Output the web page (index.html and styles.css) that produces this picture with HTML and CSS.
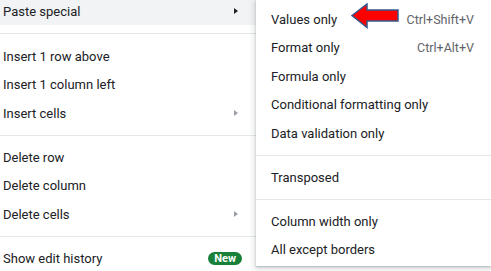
FILE: index.html
```html
<!DOCTYPE html>
<html>
<head>
<meta charset="utf-8">
<link rel="stylesheet" href="styles.css">
</head>
<body>
<div class="stage">
  <div class="menu">
    <div class="item active"><span class="label">Paste special</span><span class="tri dark"></span></div>
    <div class="sep first"></div>
    <div class="item"><span class="label">Insert 1 row above</span></div>
    <div class="item"><span class="label">Insert 1 column left</span></div>
    <div class="item"><span class="label">Insert cells</span><span class="tri"></span></div>
    <div class="sep"></div>
    <div class="item"><span class="label">Delete row</span></div>
    <div class="item"><span class="label">Delete column</span></div>
    <div class="item"><span class="label">Delete cells</span><span class="tri"></span></div>
    <div class="sep"></div>
    <div class="item"><span class="label">Show edit history</span><span class="badge">New</span></div>
  </div>
  <div class="submenu">
    <div class="sitem"><span class="label">Values only</span><span class="key">Ctrl+Shift+V</span></div>
    <div class="sitem"><span class="label">Format only</span><span class="key">Ctrl+Alt+V</span></div>
    <div class="sitem"><span class="label">Formula only</span></div>
    <div class="sitem"><span class="label">Conditional formatting only</span></div>
    <div class="sitem"><span class="label">Data validation only</span></div>
    <div class="sep"></div>
    <div class="sitem"><span class="label">Transposed</span></div>
    <div class="sep"></div>
    <div class="sitem"><span class="label">Column width only</span></div>
    <div class="sitem"><span class="label">All except borders</span></div>
  </div>
  <svg class="callout" width="50" height="28" viewBox="0 0 50 28">
    <polygon points="1,12.5 16,1 16,7 47,7 47,18 16,18 16,24.5 1,12.5" fill="#ff0000" stroke="#36598c" stroke-width="1.5" stroke-linejoin="miter"/>
  </svg>
</div>
</body>
</html>
```

FILE: styles.css
```css
html, body {
  margin: 0;
  padding: 0;
  background: #ffffff;
}
body {
  font-family: Roboto, "Liberation Sans", sans-serif;
  font-size: 13px;
  color: #202124;
  overflow: hidden;
}
.stage {
  position: relative;
  width: 491px;
  height: 271px;
  display: flex;
  overflow: hidden;
}
.menu {
  width: 256px;
  flex: none;
  margin-top: -3px;
  background: #ffffff;
}
.item {
  height: 28.5px;
  display: flex;
  align-items: center;
  padding: 0 18px 0 3px;
}
.item .label {
  flex: 1;
}
.item.active {
  background: #f1f3f4;
  height: 28px;
}
.sep {
  height: 1px;
  background: #e5e7ea;
  margin: 7px 0 7.5px;
}
.sep.first {
  margin: 7.5px 0 8.5px;
}
.tri {
  width: 0;
  height: 0;
  border-top: 3px solid transparent;
  border-bottom: 3px solid transparent;
  border-left: 4px solid #9aa0a6;
}
.tri.dark {
  border-left-color: #202124;
}
.badge {
  background: #188038;
  color: #ffffff;
  font-weight: 700;
  font-size: 11px;
  line-height: 13px;
  height: 13px;
  padding: 0 6px;
  border-radius: 7px;
  margin-right: -4px;
}
.submenu {
  width: 235px;
  flex: none;
  align-self: flex-start;
  background: #ffffff;
  padding: 5px 0 2px;
  box-shadow: 0 2px 6px 2px rgba(60, 64, 67, 0.15), 0 1px 2px rgba(60, 64, 67, 0.3);
  position: relative;
}
.sitem {
  height: 28.5px;
  display: flex;
  align-items: center;
  padding: 0 17px 0 15px;
}
.sitem .label {
  flex: 1;
}
.key {
  color: #5f6368;
  font-size: 12.5px;
}
.submenu .sep {
  margin: 7px 0 7.5px;
}
.callout {
  position: absolute;
  left: 351px;
  top: 3px;
}
```
